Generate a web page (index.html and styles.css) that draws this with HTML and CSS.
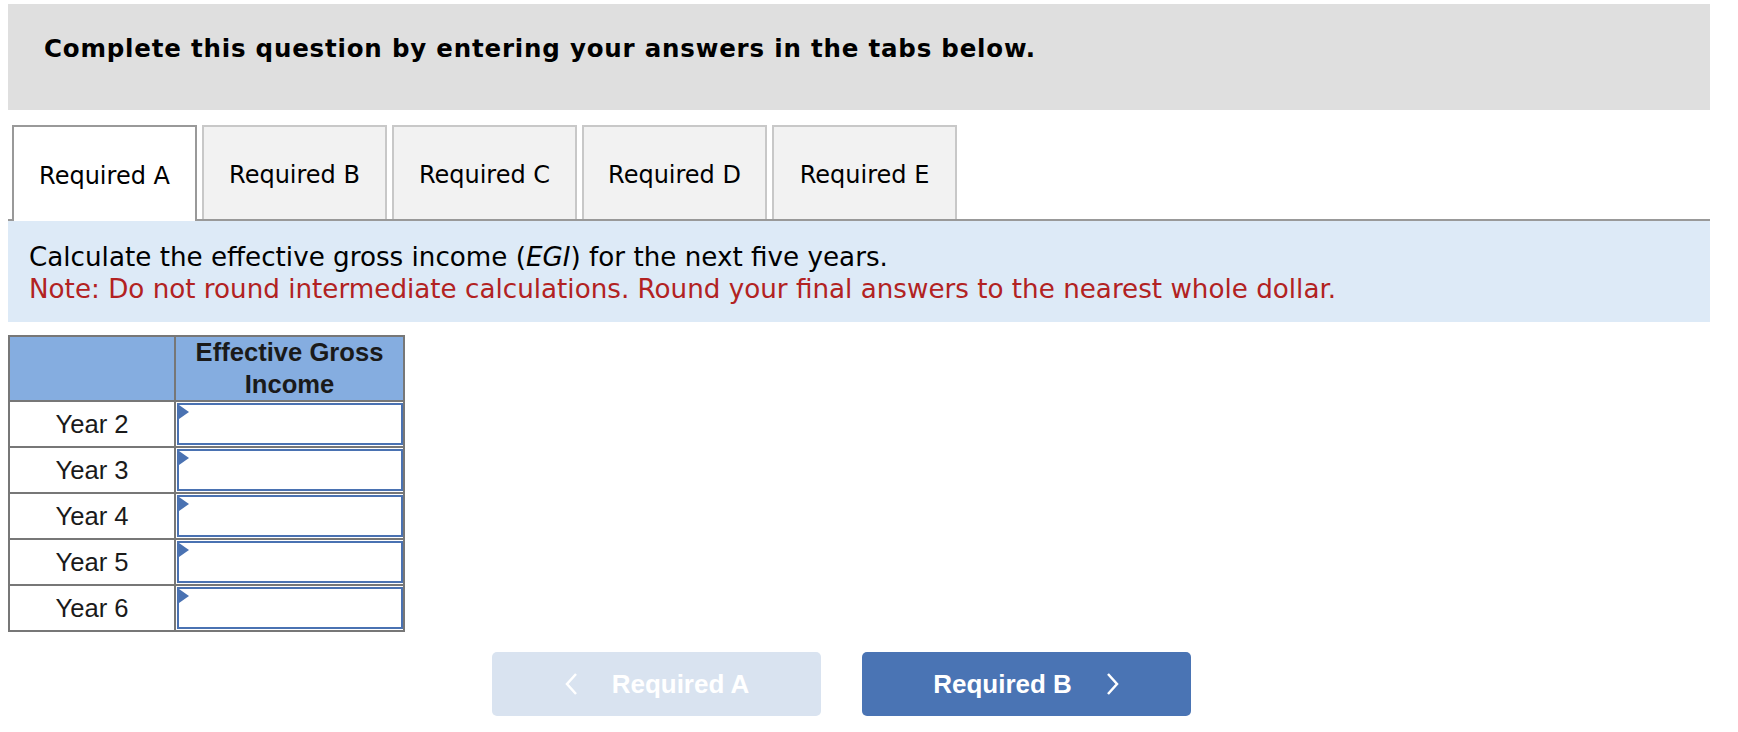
FILE: index.html
```html
<!DOCTYPE html>
<html>
<head>
<meta charset="utf-8">
<link rel="stylesheet" href="styles.css">
</head>
<body>
<div class="page">
  <div class="header">Complete this question by entering your answers in the tabs below.</div>
  <div class="tabs">
    <div class="tab active">Required A</div>
    <div class="tab">Required B</div>
    <div class="tab">Required C</div>
    <div class="tab">Required D</div>
    <div class="tab">Required E</div>
  </div>
  <div class="panel">
    <div class="q">Calculate the effective gross income (<i>EGI</i>) for the next five years.</div>
    <div class="note">Note: Do not round intermediate calculations. Round your final answers to the nearest whole dollar.</div>
  </div>
  <table class="grid">
    <tr class="head"><th class="c1"></th><th class="c2">Effective Gross<br>Income</th></tr>
    <tr><td class="lbl">Year 2</td><td class="cell"><div class="inp"></div></td></tr>
    <tr><td class="lbl">Year 3</td><td class="cell"><div class="inp"></div></td></tr>
    <tr><td class="lbl">Year 4</td><td class="cell"><div class="inp"></div></td></tr>
    <tr><td class="lbl">Year 5</td><td class="cell"><div class="inp"></div></td></tr>
    <tr><td class="lbl">Year 6</td><td class="cell"><div class="inp"></div></td></tr>
  </table>
  <div class="nav">
    <div class="btn prev"><svg class="chev" width="14" height="24" viewBox="0 0 14 24"><polyline points="12,2 3,12 12,22" fill="none" stroke="#fff" stroke-width="2.5"/></svg><span>Required A</span></div>
    <div class="btn next"><span>Required B</span><svg class="chev" width="14" height="24" viewBox="0 0 14 24"><polyline points="2,2 11,12 2,22" fill="none" stroke="#fff" stroke-width="2.5"/></svg></div>
  </div>
</div>
</body>
</html>
```
FILE: styles.css
```css
body {
  margin: 0;
  font-family: "DejaVu Sans", Verdana, sans-serif;
  color: #000;
  background: #fff;
}
.page {
  padding: 4px 28px 0 8px;
}
.header {
  background: #dfdfdf;
  height: 106px;
  box-sizing: border-box;
  padding: 30px 0 0 36px;
  font-weight: bold;
  font-size: 24.5px;
  letter-spacing: 0.8px;
  line-height: 1.2;
}
.tabs {
  display: flex;
  gap: 5px;
  margin-top: 15px;
  padding-left: 4px;
  border-bottom: 2px solid #999;
  height: 94px;
}
.tab {
  width: 185px;
  box-sizing: border-box;
  height: 94px;
  border: 2px solid #c8c8c8;
  border-bottom: none;
  background: #f2f2f2;
  display: flex;
  align-items: center;
  justify-content: center;
  font-size: 24px;
  padding-top: 3px;
}
.tab.active {
  background: #fff;
  border-color: #999;
  height: 96px;
}
.panel {
  background: #ddeaf7;
  height: 101px;
  box-sizing: border-box;
  padding: 20px 21px 0;
  font-size: 26.2px;
  line-height: 32px;
}
.note {
  color: #b22222;
}
.grid {
  margin-top: 13px;
  border-collapse: collapse;
  font-family: "Liberation Sans", Arial, sans-serif;
  font-size: 25.6px;
}
.grid th, .grid td {
  border: 2px solid #777;
  padding: 0;
}
.grid th {
  background: #85ade0;
  height: 63px;
  line-height: 31.5px;
  font-weight: bold;
  color: #1a1a1a;
}
.grid .c1 { width: 164px; }
.grid .c2 { width: 227px; }
.grid td { height: 44px; }
.lbl {
  text-align: center;
  color: #1a1a1a;
}
.inp {
  position: relative;
  height: 42px;
  box-sizing: border-box;
  border: 2px solid #4a72b2;
  margin: 0 0 0 1px;
  background: #fff;
}
.inp::before {
  content: "";
  position: absolute;
  left: 0;
  top: 0;
  border-left: 10px solid #4a72b2;
  border-top: 7px solid transparent;
  border-bottom: 7px solid transparent;
}
.nav {
  display: flex;
  gap: 41px;
  margin: 20px 0 0 484px;
}
.btn {
  width: 329px;
  height: 64px;
  border-radius: 5px;
  display: flex;
  align-items: center;
  justify-content: center;
  gap: 34px;
  color: #fff;
  font-family: "Liberation Sans", Arial, sans-serif;
  font-weight: bold;
  font-size: 26px;
}
.prev { background: #d9e3f0; }
.next { background: #4a74b4; }
```
